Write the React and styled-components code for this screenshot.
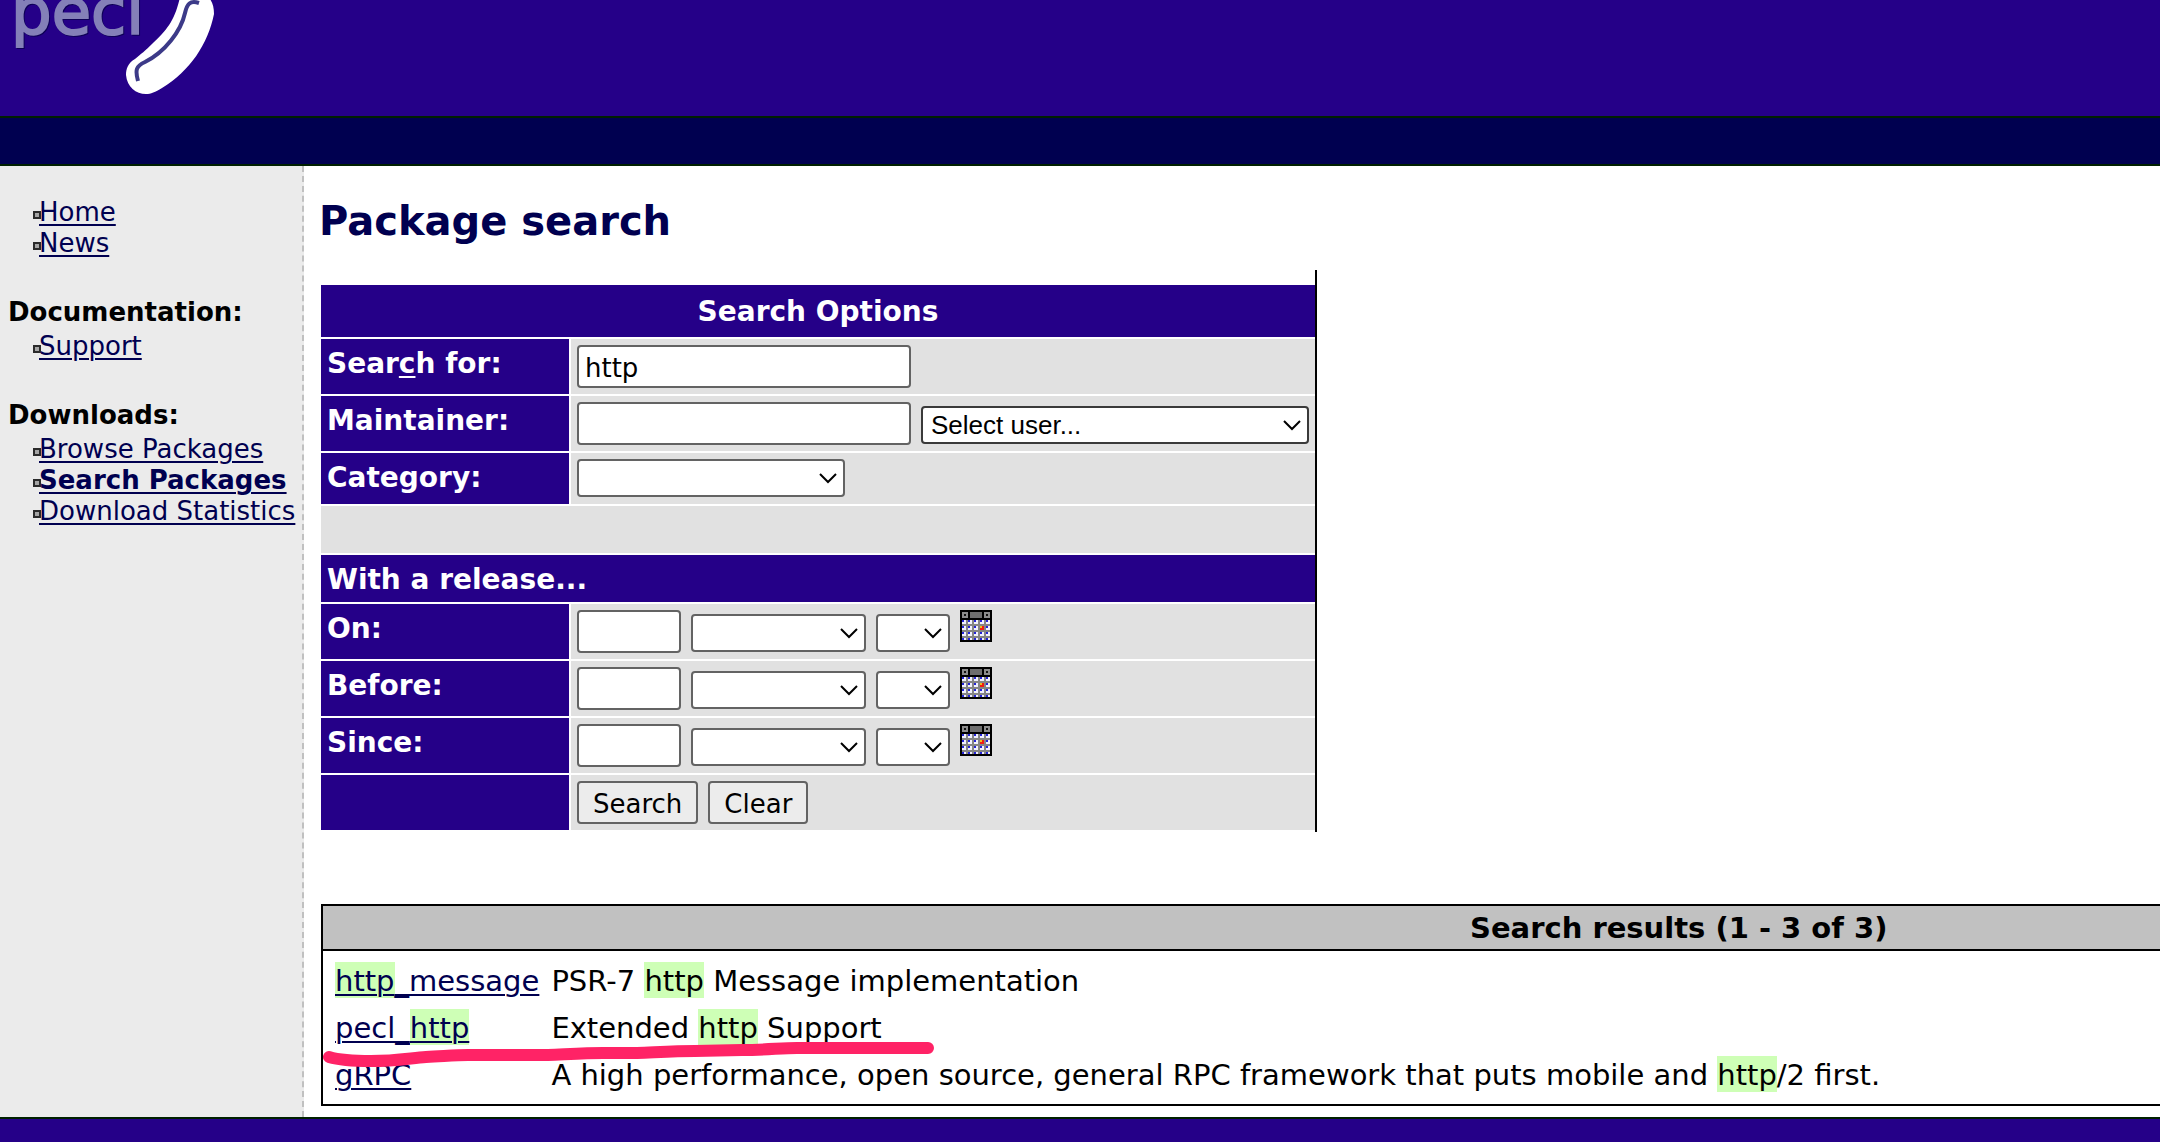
import { useState } from "react";
import styled, { createGlobalStyle, ThemeProvider } from "styled-components";

const theme = {
  purple: "#250088",
  navy: "#000050",
  edge: "#002000",
  sidebar: "#ebebeb",
  cell: "#e1e1e1",
  heading: "#c1c1c1",
  mark: "#ceffb6",
  control: "#636363",
};

const menu = [
  { links: [{ label: "Home" }, { label: "News" }] },
  { title: "Documentation:", links: [{ label: "Support" }] },
  {
    title: "Downloads:",
    links: [
      { label: "Browse Packages" },
      { label: "Search Packages", current: true },
      { label: "Download Statistics" },
    ],
  },
];

const results = [
  { name: "http_message", summary: "PSR-7 http Message implementation" },
  { name: "pecl_http", summary: "Extended http Support" },
  {
    name: "gRPC",
    summary:
      "A high performance, open source, general RPC framework that puts mobile and http/2 first.",
  },
];

const months = [
  "January",
  "February",
  "March",
  "April",
  "May",
  "June",
  "July",
  "August",
  "September",
  "October",
  "November",
  "December",
];

const days = Array.from({ length: 31 }, (_, i) => i + 1);

export default function App() {
  const [term, setTerm] = useState("http");

  return (
    <ThemeProvider theme={theme}>
      <GlobalStyle />
      <Page>
        <Header>
          <a href="#home" aria-label="PECL">
            <Logo />
          </a>
        </Header>
        <TopBar />
        <Body>
          <Sidebar>
            {menu.map((group, i) => (
              <MenuGroup key={i}>
                {group.title && <MenuTitle>{group.title}</MenuTitle>}
                <MenuList>
                  {group.links.map(link => (
                    <MenuItem key={link.label}>
                      <MenuLink href="#menu" $current={link.current}>
                        {link.label}
                      </MenuLink>
                    </MenuItem>
                  ))}
                </MenuList>
              </MenuGroup>
            ))}
          </Sidebar>
          <Main>
            <Title>Package search</Title>
            <SearchForm onSubmit={e => e.preventDefault()}>
              <OptionsTable>
                <tbody>
                  <tr>
                    <OptionsTitle colSpan={2}>Search Options</OptionsTitle>
                  </tr>
                  <tr>
                    <LabelCell>
                      <label htmlFor="term">
                        Sear<u>c</u>h for:
                      </label>
                    </LabelCell>
                    <FieldCell>
                      <Fields>
                        <TextBox
                          id="term"
                          type="text"
                          value={term}
                          onChange={e => setTerm(e.target.value)}
                        />
                      </Fields>
                    </FieldCell>
                  </tr>
                  <tr>
                    <LabelCell>
                      <label htmlFor="maintainer">Maintainer:</label>
                    </LabelCell>
                    <FieldCell>
                      <Fields>
                        <TextBox id="maintainer" type="text" />
                        <Select $width={388} $dark aria-label="Select user">
                          <option>Select user...</option>
                        </Select>
                      </Fields>
                    </FieldCell>
                  </tr>
                  <tr>
                    <LabelCell>
                      <label htmlFor="category">Category:</label>
                    </LabelCell>
                    <FieldCell>
                      <Fields>
                        <Select id="category" $width={268}>
                          <option></option>
                        </Select>
                      </Fields>
                    </FieldCell>
                  </tr>
                  <tr>
                    <SpacerCell colSpan={2}>&nbsp;</SpacerCell>
                  </tr>
                  <tr>
                    <LabelCell colSpan={2}>With a release...</LabelCell>
                  </tr>
                  <DateRow label="On:" name="on" />
                  <DateRow label="Before:" name="before" />
                  <DateRow label="Since:" name="since" />
                  <tr>
                    <LabelCell />
                    <FieldCell>
                      <Fields>
                        <Button type="submit">Search</Button>
                        <Button type="button" onClick={() => setTerm("")}>
                          Clear
                        </Button>
                      </Fields>
                    </FieldCell>
                  </tr>
                </tbody>
              </OptionsTable>
            </SearchForm>

            <Results>
              <ResultsTable>
                <thead>
                  <tr>
                    <ResultsTitle colSpan={2}>Search results (1 - 3 of 3)</ResultsTitle>
                  </tr>
                </thead>
                <tbody>
                  {results.map(item => (
                    <ResultRow key={item.name}>
                      <td>
                        <a href="#package">
                          <Highlight text={item.name} />
                        </a>
                      </td>
                      <td>
                        <Highlight text={item.summary} />
                      </td>
                    </ResultRow>
                  ))}
                </tbody>
              </ResultsTable>
              <Marker viewBox="0 0 620 32" aria-hidden="true">
                <path d="M8 21 C18 24 28 25 50 25 C75 25 90 22 105 21 C125 20 135 19 147 19 L227 19 C250 18 265 17 282 17 L316 17 C340 16 355 15 374 15 L421 14 C445 14 460 12 476 12 L501 12 L607 12" />
              </Marker>
            </Results>
          </Main>
        </Body>
        <Footer />
      </Page>
    </ThemeProvider>
  );
}

function DateRow({ label, name }) {
  return (
    <tr>
      <LabelCell>
        <label htmlFor={name}>{label}</label>
      </LabelCell>
      <FieldCell>
        <Fields>
          <TextBox id={name} type="text" $short />
          <Select $width={175} aria-label={`${label} month`}>
            <option></option>
            {months.map(month => (
              <option key={month}>{month}</option>
            ))}
          </Select>
          <Select $width={74} aria-label={`${label} day`}>
            <option></option>
            {days.map(day => (
              <option key={day}>{day}</option>
            ))}
          </Select>
          <CalendarLink href="#calendar" aria-label={`${label} calendar`}>
            <CalendarIcon />
          </CalendarLink>
        </Fields>
      </FieldCell>
    </tr>
  );
}

function Highlight({ text }) {
  return text
    .split(/(http)/)
    .map((part, i) => (part === "http" ? <Mark key={i}>{part}</Mark> : part));
}

function Logo() {
  return (
    <LogoSvg width="230" height="104" viewBox="0 0 230 104">
      <text x="12" y="35" fill="#0e0056" stroke="#0e0056">
        pecl
      </text>
      <text x="11" y="34" fill="#8480b8" stroke="#8480b8">
        pecl
      </text>
      <path
        d="M180 -3 C175 20 167 30 153 43 C145 51 141 54 135 59 C128 63 126 69 126 75 C127 87 136 94 146 94 C151 94 155 92 162 88 C190 71 208 44 214 14 C214 6 212 0 207 -4 Z"
        fill="#fff"
      />
      <path
        d="M199 3 C190 0 187 4 185 13 C181 31 165 52 145 62 C136 66 135 70 138 81"
        fill="none"
        stroke="#3c3a88"
        strokeWidth="4"
      />
    </LogoSvg>
  );
}

function CalendarIcon() {
  return (
    <svg width="32" height="32" viewBox="0 0 32 32">
      <rect width="32" height="32" fill="#000" />
      <rect x="2" y="2" width="6" height="6" fill="#8c8c8c" />
      <rect x="4" y="4" width="2" height="2" fill="#111" />
      <rect x="10" y="2" width="12" height="6" fill="#6e6e6e" />
      <rect x="24" y="2" width="6" height="6" fill="#8c8c8c" />
      <rect x="26" y="4" width="2" height="2" fill="#111" />
      <rect x="2" y="10" width="28" height="20" fill="#858585" />
      {[10, 16, 22, 28].map((y, row) =>
        [2, 8, 14, 20, 26].map((x, col) => {
          const today = row === 1 && col === 3;
          const h = row === 3 ? 2 : 4;
          return (
            <g key={`${x}-${y}`}>
              <rect x={x} y={y} width="4" height={h} fill={today ? "#f01c10" : "#f0f0ff"} />
              <rect x={x} y={y} width="2" height="2" fill={today ? "#e8c020" : "#2222d8"} />
            </g>
          );
        })
      )}
    </svg>
  );
}

const chevron =
  "url(\"data:image/svg+xml,%3Csvg xmlns='http://www.w3.org/2000/svg' width='18' height='11' viewBox='0 0 18 11'%3E%3Cpath d='M1 1l8 8 8-8' fill='none' stroke='%23000' stroke-width='2'/%3E%3C/svg%3E\")";

const GlobalStyle = createGlobalStyle`
  *,
  *::before {
    box-sizing: border-box;
  }

  body {
    margin: 0;
    background-color: #fff;
    color: #000;
    font-family: Verdana, "DejaVu Sans", sans-serif;
    font-size: 29px;
    line-height: 35px;
  }

  a {
    color: ${theme.navy};
    text-decoration-thickness: 2px;
    text-underline-offset: 3px;
  }
`;

const Page = styled.div`
  display: flex;
  flex-direction: column;
  min-height: 100vh;
  overflow: hidden;
`;

const Header = styled.header`
  background-color: ${props => props.theme.purple};
  padding-bottom: 12px;

  a {
    display: inline-block;
    vertical-align: top;
  }
`;

const LogoSvg = styled.svg`
  display: block;

  text {
    font-family: "DejaVu Sans", sans-serif;
    font-size: 64px;
    stroke-width: 2px;
  }
`;

const TopBar = styled.nav`
  height: 50px;
  background-color: ${props => props.theme.navy};
  border: solid ${props => props.theme.edge};
  border-width: 2px 0;
`;

const Body = styled.div`
  display: flex;
`;

const Sidebar = styled.nav`
  flex: none;
  width: 304px;
  padding: 31px 8px;
  background-color: ${props => props.theme.sidebar};
  border-right: 2px dashed #c0c0c0;
  font-size: 26px;
  line-height: 31px;
`;

const MenuGroup = styled.section`
  margin-bottom: 38px;
`;

const MenuTitle = styled.h2`
  margin: 0 0 3px;
  font-size: 26px;
  line-height: 31px;
`;

const MenuList = styled.ul`
  margin: 0;
  padding: 0 0 0 25px;
  list-style: none;
`;

const MenuItem = styled.li`
  display: flex;
  align-items: center;
  white-space: nowrap;

  &::before {
    content: "";
    flex: none;
    width: 8px;
    height: 8px;
    margin: 4px -2px 0 0;
    border: 2px solid #2b2b2b;
    background-color: #a5a5a5;
  }
`;

const MenuLink = styled.a`
  font-weight: ${props => (props.$current ? "bold" : "normal")};
`;

const Main = styled.main`
  flex: 1;
  min-width: 0;
  padding: 31px 0 11px 15px;
`;

const Title = styled.h1`
  margin: 0 0 25px;
  font-size: 40px;
  line-height: 48px;
  color: ${props => props.theme.navy};
`;

const SearchForm = styled.form`
  width: fit-content;
  margin: 0 0 72px 2px;
  padding: 15px 0 2px;
  border-right: 2px solid #000;
`;

const OptionsTable = styled.table`
  border-spacing: 0;
  font-size: 28px;
`;

const OptionsTitle = styled.th`
  padding: 9px 6px 8px;
  background-color: ${props => props.theme.purple};
  color: #fff;
`;

const LabelCell = styled.th`
  min-width: 248px;
  padding: 7px 6px 5px;
  border-top: 2px solid #fff;
  background-color: ${props => props.theme.purple};
  color: #fff;
  text-align: left;
  vertical-align: top;

  u {
    text-decoration-thickness: 2px;
    text-underline-offset: 3px;
  }
`;

const FieldCell = styled.td`
  padding: 6px;
  border-top: 2px solid #fff;
  border-left: 2px solid #fff;
  background-color: ${props => props.theme.cell};
`;

const SpacerCell = styled.td`
  padding: 6px;
  border-top: 2px solid #fff;
  background-color: ${props => props.theme.cell};
`;

const Fields = styled.div`
  display: flex;
  align-items: flex-end;
  gap: 10px;
`;

const TextBox = styled.input`
  width: ${props => (props.$short ? 104 : 334)}px;
  height: 43px;
  padding: 3px 6px 1px;
  border: 2px solid ${props => props.theme.control};
  border-radius: 4px;
  background-color: #fff;
  color: #000;
  font-family: inherit;
  font-size: 26px;
`;

const Select = styled.select`
  appearance: none;
  width: ${props => props.$width}px;
  height: 38px;
  margin: 0 0 1px;
  padding: 0 32px 0 8px;
  border: 2px solid ${props => (props.$dark ? "#3a3a3a" : props.theme.control)};
  border-radius: 4px;
  background: #fff ${chevron} no-repeat right 6px center;
  color: #000;
  font-family: "Liberation Sans", Arial, sans-serif;
  font-size: 26px;
`;

const Button = styled.button`
  height: 43px;
  padding: 2px 14px 0;
  border: 2px solid ${props => props.theme.control};
  border-radius: 4px;
  background-color: #ececec;
  color: #000;
  font-family: inherit;
  font-size: 26px;
`;

const CalendarLink = styled.a`
  align-self: flex-start;

  svg {
    display: block;
  }
`;

/* wide listing, runs past the right edge of the window */
const Results = styled.section`
  position: relative;
  width: 147.5%;
  margin-left: 2px;
`;

const ResultsTable = styled.table`
  width: 100%;
  border: 2px solid #000;
  border-spacing: 0;
`;

const ResultsTitle = styled.th`
  padding: 5px 4px 3px;
  border-bottom: 2px solid #000;
  background-color: ${props => props.theme.heading};
`;

const ResultRow = styled.tr`
  td {
    padding: 7px 0 5px;
    white-space: nowrap;
  }

  td:first-child {
    width: 1px;
    padding: 7px 12px 5px;
  }

  &:first-child td {
    padding-top: 13px;
  }

  &:last-child td {
    padding-bottom: 11px;
  }
`;

const Mark = styled.mark`
  padding: 2px 0 0;
  background-color: ${props => props.theme.mark};
  color: inherit;
`;

const Marker = styled.svg`
  position: absolute;
  top: 132px;
  left: 0;
  width: 620px;
  height: 32px;
  pointer-events: none;

  path {
    fill: none;
    stroke: #ff2366;
    stroke-width: 12px;
    stroke-linecap: round;
  }
`;

const Footer = styled.footer`
  flex: 1;
  min-height: 24px;
  background-color: ${props => props.theme.purple};
  border-top: 2px solid ${props => props.theme.edge};
`;
